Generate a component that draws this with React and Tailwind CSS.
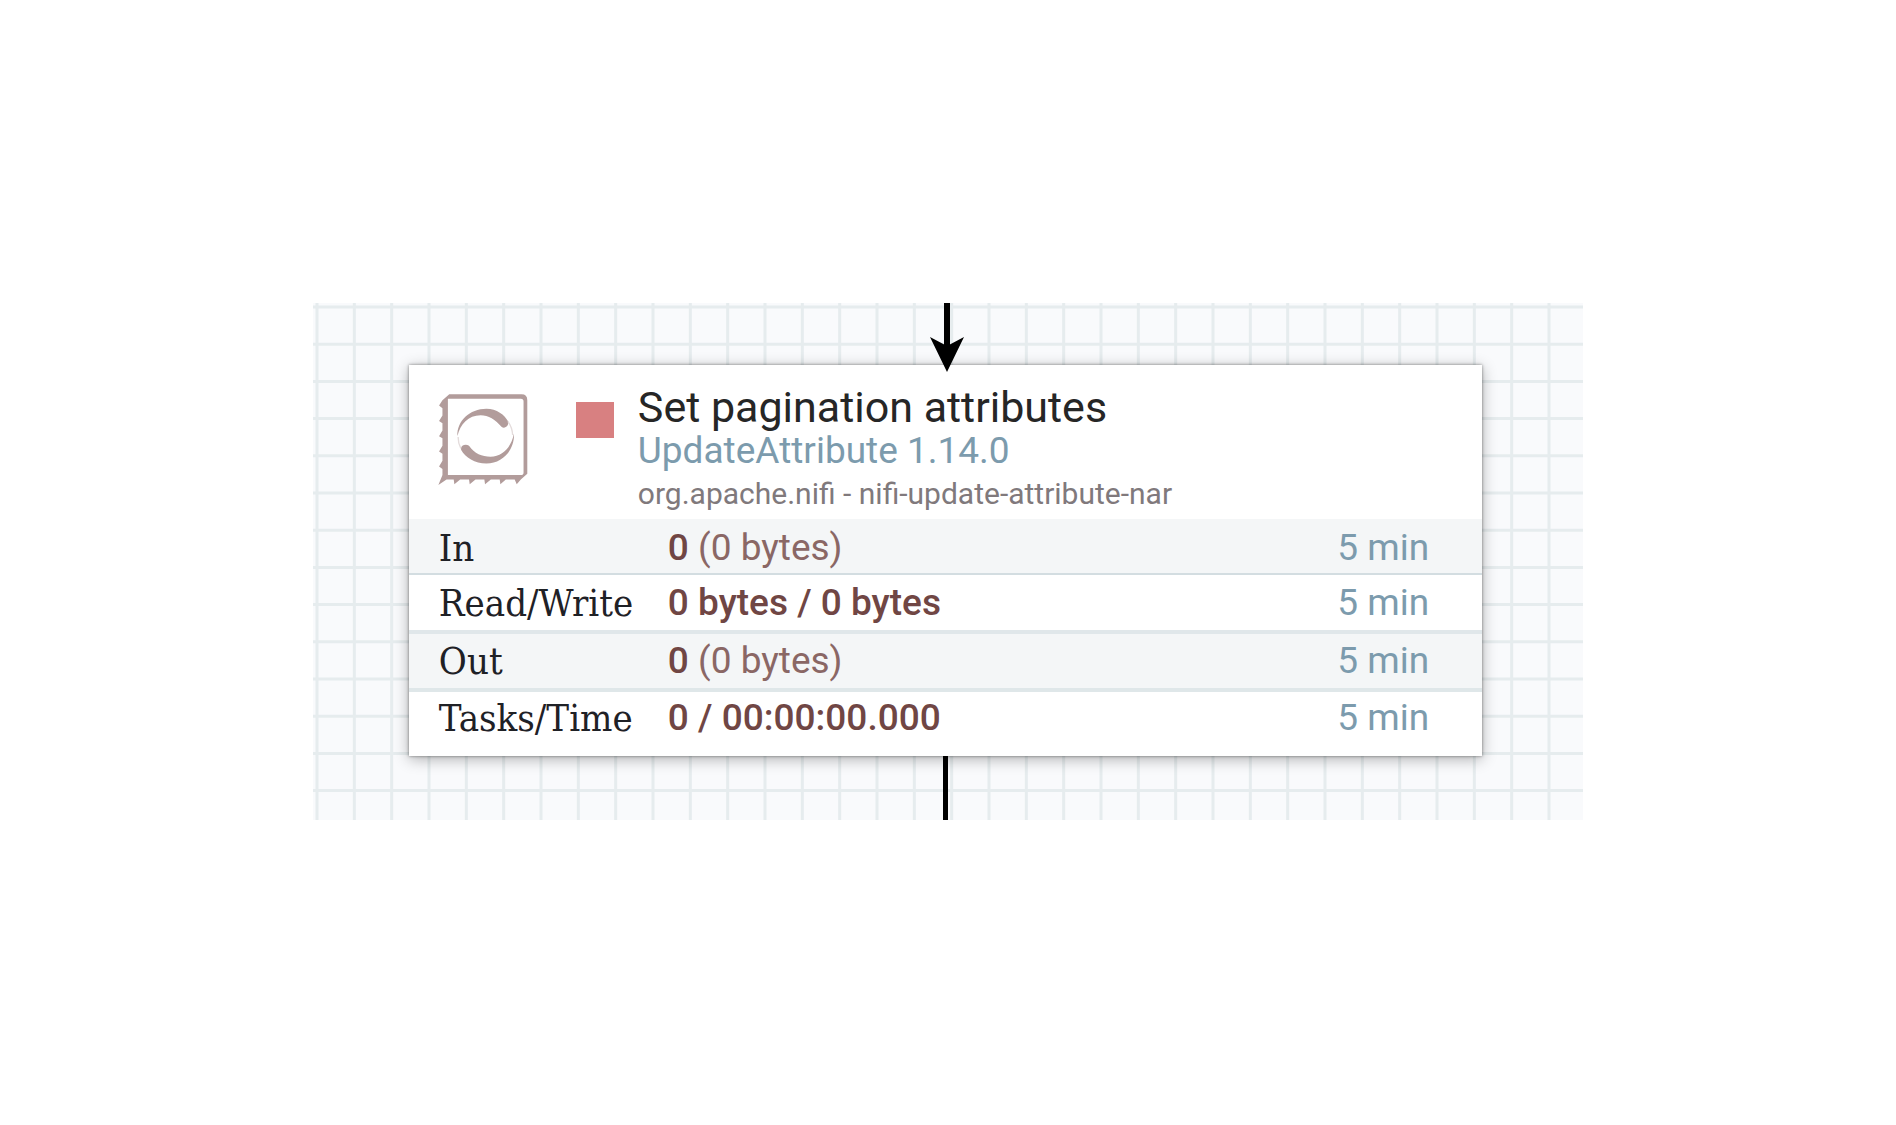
const rows = [
  { label: 'In', strong: '0', rest: ' (0 bytes)', height: 'h-[55px]', cell: 'pt-1', tone: 'bg-[#f4f6f7] border-b-2 border-[#d3dde1]' },
  { label: 'Read/Write', strong: '0 bytes / 0 bytes', rest: '', height: 'h-[58px]', cell: 'pt-0', tone: 'bg-white border-b-4 border-[#e0e7ea]' },
  { label: 'Out', strong: '0', rest: ' (0 bytes)', height: 'h-[58px]', cell: 'pt-0', tone: 'bg-[#f4f6f7] border-b-4 border-[#dfe7e9]' },
  { label: 'Tasks/Time', strong: '0 / 00:00:00.000', rest: '', height: 'h-[66px]', cell: 'pb-3', tone: 'bg-white' },
];

const PITCH_X = 112 / 3;
const PITCH_Y = 186 / 5;

function CanvasGrid() {
  return (
    <svg className="absolute inset-0 h-full w-full" stroke="#e6ecee" strokeWidth="3" aria-hidden="true">
      {Array.from({ length: 80 }, (_, i) => (
        <line key={`v${i}`} x1={4 + i * PITCH_X} x2={4 + i * PITCH_X} y1="0" y2="100%" />
      ))}
      {Array.from({ length: 40 }, (_, i) => (
        <line key={`h${i}`} x1="0" x2="100%" y1={4 + i * PITCH_Y} y2={4 + i * PITCH_Y} />
      ))}
    </svg>
  );
}

function ProcessorIcon() {
  return (
    <svg className="h-[92px] w-[90px] shrink-0" viewBox="39 39 264 270" fill="#b29c9b" aria-hidden="true">
      <path
        fillRule="evenodd"
        d="M72 43H284Q301 43 301 60V276L282 293L270 307L264 293H238L222 307L220 293H194L177 307L175 293H149L132 307L130 293H104L87 307L85 293H64L40 309L52 280V262L42 255L52 238V217L42 211L52 194V172L42 166L52 149V128L42 121L52 105V84L42 76L52 60ZM68 56V280H282Q290 280 290 272V64Q290 56 282 56Z"
      />
      <path d="M96 165C94 121 132 85 181 85C211 85 235 103 245 123C248 134 236 145 226 139C207 116 187 104 164 104C128 104 104 130 96 165Z" />
      <path d="M262 158C264 207 228 246 181 246C147 246 119 227 107 206C103 194 119 187 130 194C146 217 168 226 193 226C230 226 254 197 262 158Z" />
      <path d="M244 122Q257 140 258 162M98 168Q98 187 106 202" fill="none" stroke="#e4dcdc" strokeWidth="4" />
    </svg>
  );
}

export default function App() {
  return (
    <main className="flex min-h-screen items-center justify-center bg-white pb-0.5 font-['Roboto',sans-serif]">
      <section className="relative flex w-[67%] flex-col items-center overflow-hidden bg-[#f9fafc] pr-[101px] pl-[96px]">
        <CanvasGrid />
        <svg className="relative z-10 h-[62px] w-10 overflow-visible" viewBox="0 0 40 62" aria-hidden="true">
          <path d="M18 0H24V44H18Z" />
          <path d="M4 34L21 43L38 34L21 69Z" />
        </svg>
        <article className="relative w-full bg-white shadow-[0_3px_14px_rgba(0,0,0,0.3),0_0_3px_rgba(0,0,0,0.45)]">
          <header className="flex h-[154px] items-start pl-[29px]">
            <div className="pt-7">
              <ProcessorIcon />
            </div>
            <div className="mt-[37px] ml-12 h-[36px] w-[38px] shrink-0 bg-[#d88081]" role="img" aria-label="Stopped" />
            <div className="ml-6 pt-[18px] whitespace-nowrap">
              <h1 className="text-[43px] leading-[48px] text-[#262626]">Set pagination attributes</h1>
              <p className="text-[37px] leading-[40px] text-[#7c9bad]">UpdateAttribute 1.14.0</p>
              <p className="text-[30px] leading-[46px] text-[#80797c]">org.apache.nifi - nifi-update-attribute-nar</p>
            </div>
          </header>
          <table className="w-full border-collapse text-left whitespace-nowrap">
            <tbody>
              {rows.map((row) => (
                <tr key={row.label} className={`${row.height} ${row.tone}`}>
                  <th
                    scope="row"
                    className={`w-[259px] p-0 pl-[30px] font-['DejaVu_Serif_Condensed','DejaVu_Serif',serif] text-[38px] leading-[48px] font-normal text-[#1f2126] ${row.cell}`}
                  >
                    {row.label}
                  </th>
                  <td className={`p-0 text-[37px] leading-[48px] text-[#8a6765] ${row.cell}`}>
                    <span className="font-medium text-[#704644]">{row.strong}</span>
                    {row.rest}
                  </td>
                  <td className={`p-0 pr-[53px] text-right text-[37px] leading-[48px] text-[#7c9bad] ${row.cell}`}>5 min</td>
                </tr>
              ))}
            </tbody>
          </table>
        </article>
        <svg className="relative h-16 w-[5px]" viewBox="0 0 5 64" aria-hidden="true">
          <path d="M0 0H5V64H0Z" />
        </svg>
      </section>
    </main>
  );
}
